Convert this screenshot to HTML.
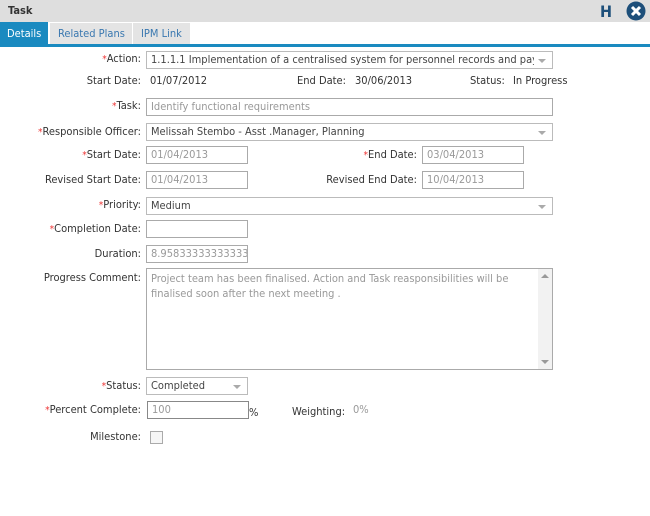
<!DOCTYPE html>
<html><head><style>
*{margin:0;padding:0;box-sizing:border-box}
body{width:650px;height:516px;background:#fff;font-family:"DejaVu Sans Condensed","Liberation Sans",sans-serif;font-size:11px;color:#333;position:relative;overflow:hidden}
.a{position:absolute;white-space:nowrap}
.hdr{left:0;top:0;width:650px;height:22px;background:#dedede}
.lab{text-align:right;width:200px}
.s{color:#e33;font-size:10px}
.box{position:absolute;border:1px solid #aaa;background:#fff;color:#999;padding:1px 4px;height:18px;line-height:14px;overflow:hidden;white-space:nowrap}
.dd{color:#444;border-color:#bbb}
.dd:after{content:"";position:absolute;right:6px;top:7px;border-left:4px solid transparent;border-right:4px solid transparent;border-top:4px solid #aaa}
</style></head><body>
<div class="a hdr"></div>
<div class="a" style="left:8px;top:4px;font-weight:bold;font-size:11px;color:#333">Task</div>
<div class="a" style="left:600px;top:2px;font-weight:bold;font-size:16px;color:#1d4f7a">H</div>
<svg class="a" style="left:626px;top:1px" width="20" height="20" viewBox="0 0 20 20"><circle cx="10" cy="10" r="9.5" fill="#1d4f7a"/><path d="M6 6L14 14M14 6L6 14" stroke="#fff" stroke-width="3"/></svg>
<div class="a" style="left:0;top:22px;width:48px;height:23px;background:#1a8ac0;color:#fff;padding:5px 0 0 7px">Details</div>
<div class="a" style="left:50px;top:23px;width:82px;height:22px;background:#e4e4e4;color:#3a78b0;padding:4px 0 0 8px">Related Plans</div>
<div class="a" style="left:133px;top:23px;width:57px;height:22px;background:#e4e4e4;color:#3a78b0;padding:4px 0 0 8px">IPM Link</div>
<div class="a" style="left:0;top:44px;width:650px;height:3px;background:#1a8ac0"></div>

<div class="a lab" style="left:-59px;top:52px"><span class="s">*</span>Action:</div>
<div class="box dd" style="left:146px;top:51px;width:407px"><div style="width:383px;overflow:hidden">1.1.1.1 Implementation of a centralised system for personnel records and payroll</div></div>
<div class="a lab" style="left:-59px;top:74px">Start Date:</div>
<div class="a" style="left:150px;top:74px">01/07/2012</div>
<div class="a" style="left:297px;top:74px">End Date:</div>
<div class="a" style="left:355px;top:74px">30/06/2013</div>
<div class="a" style="left:470px;top:74px">Status:</div>
<div class="a" style="left:513px;top:74px">In Progress</div>

<div class="a lab" style="left:-59px;top:99px"><span class="s">*</span>Task:</div>
<div class="box" style="left:146px;top:98px;width:407px">Identify functional requirements</div>
<div class="a lab" style="left:-59px;top:125px"><span class="s">*</span>Responsible Officer:</div>
<div class="box dd" style="left:146px;top:123px;width:407px">Melissah Stembo - Asst .Manager, Planning</div>
<div class="a lab" style="left:-59px;top:148px"><span class="s">*</span>Start Date:</div>
<div class="box" style="left:146px;top:146px;width:102px">01/04/2013</div>
<div class="a lab" style="left:217px;top:148px"><span class="s">*</span>End Date:</div>
<div class="box" style="left:422px;top:146px;width:102px">03/04/2013</div>
<div class="a lab" style="left:-59px;top:173px">Revised Start Date:</div>
<div class="box" style="left:146px;top:171px;width:102px">01/04/2013</div>
<div class="a lab" style="left:217px;top:173px">Revised End Date:</div>
<div class="box" style="left:422px;top:171px;width:102px">10/04/2013</div>
<div class="a lab" style="left:-59px;top:198px"><span class="s">*</span>Priority:</div>
<div class="box dd" style="left:146px;top:197px;width:407px">Medium</div>
<div class="a lab" style="left:-59px;top:222px"><span class="s">*</span>Completion Date:</div>
<div class="box" style="left:146px;top:220px;width:102px"></div>
<div class="a lab" style="left:-59px;top:247px">Duration:</div>
<div class="box" style="left:146px;top:245px;width:102px">8.95833333333333 Days</div>
<div class="a lab" style="left:-59px;top:271px">Progress Comment:</div>
<div class="box" style="left:146px;top:268px;width:407px;height:102px;white-space:normal;line-height:15px;padding:2px 20px 2px 4px">Project team has been finalised. Action and Task reasponsibilities will be finalised soon after the next meeting .</div>
<div class="a" style="left:538px;top:269px;width:14px;height:100px;background:#f2f2f2"></div>
<div class="a" style="left:541px;top:274px;border-left:4px solid transparent;border-right:4px solid transparent;border-bottom:4px solid #999"></div>
<div class="a" style="left:541px;top:360px;border-left:4px solid transparent;border-right:4px solid transparent;border-top:4px solid #999"></div>
<div class="a lab" style="left:-59px;top:379px"><span class="s">*</span>Status:</div>
<div class="box dd" style="left:146px;top:377px;width:102px">Completed</div>
<div class="a lab" style="left:-59px;top:403px"><span class="s">*</span>Percent Complete:</div>
<div class="box" style="left:147px;top:401px;width:102px;border-color:#888">100</div>
<div class="a" style="left:249px;top:406px">%</div>
<div class="a" style="left:292px;top:405px">Weighting:</div>
<div class="a" style="left:353px;top:403px;color:#999">0%</div>
<div class="a lab" style="left:-59px;top:430px">Milestone:</div>
<div class="a" style="left:150px;top:431px;width:13px;height:13px;border:1px solid #aaa;background:#f6f6f6"></div>
</body></html>
